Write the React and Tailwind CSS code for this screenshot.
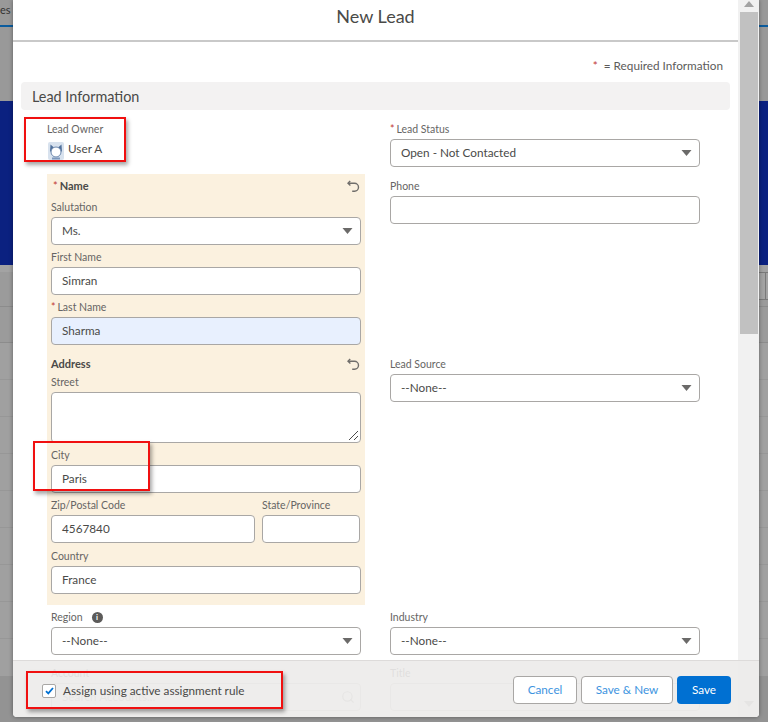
import { Search } from 'lucide-react';

function Caret() {
  return (
    <svg className="absolute right-[7px] top-1/2 -translate-y-1/2" width="11" height="7" viewBox="0 0 11 7">
      <path d="M0.5 0.5h10L5.500 6.500z" fill="#6b6a69" />
    </svg>
  );
}

function UndoIcon() {
  return (
    <svg width="13" height="13" viewBox="0 0 13 13" fill="none" stroke="#706e6b" strokeWidth="1.4">
      <path d="M3.2 1L1 3.3l2.4 2.3" />
      <path d="M1.4 3.3h6.1a3.9 3.9 0 0 1 0 8H5.2" />
    </svg>
  );
}

function Field({ label, required, children, className = '' }) {
  return (
    <div className={`flex flex-col ${className}`}>
      <div className="flex h-[22px] items-center pt-[2px] text-[10.5px] leading-none text-[#666564]">
        {required && <span className="mr-[2px] text-[#c23934]">*</span>}
        {label}
      </div>
      {children}
    </div>
  );
}

function Box({ value, filled, select }) {
  return (
    <div
      className={`relative flex h-[28px] items-center rounded-[4px] border border-[#a9a7a5] pl-[10px] text-[11.75px] text-[#4a4a48] ${
        filled ? 'bg-[#e8f0fe]' : 'bg-white'
      }`}
    >
      {value}
      {select && <Caret />}
    </div>
  );
}

function Backdrop() {
  return (
    <div className="flex h-[722px] flex-col bg-[#a0a0a0]">
      <div className="h-[25px] bg-[#999999] text-[11px] leading-[19px] text-[#333333]">es</div>
      <div className="h-[2px] bg-[#0b5c9e]" />
      <div className="h-[74px] bg-[#999999]" />
      <div className="h-[164px] bg-[#0b2180]" />
      <div className="h-[7px] bg-[#a3a3a3]" />
      <div className="flex h-[35px] justify-end border-b border-[#8c8c8c] bg-[#9b9b9b]">
        <div className="flex h-[28px] w-[9px] justify-end border-y border-[#7a7a7a] bg-[#a3a3a3]">
          <div className="w-[3px] border-l border-[#7a7a7a]" />
        </div>
      </div>
      <div className="h-[36px] border-b border-[#8c8c8c] bg-[#9b9b9b]" />
      <div className="h-[37px] border-b border-[#979797]" />
      <div className="h-[37px] border-b border-[#979797]" />
      <div className="h-[37px] border-b border-[#979797]" />
      <div className="h-[37px] border-b border-[#979797]" />
      <div className="h-[37px] border-b border-[#979797]" />
      <div className="h-[37px] border-b border-[#979797]" />
      <div className="h-[37px] border-b border-[#979797]" />
      <div className="h-[37px] border-b border-[#979797]" />
      <div className="h-[37px]" />
      <div className="flex-1 bg-[#939393]" />
    </div>
  );
}

export default function App() {
  return (
    <div className="relative h-[722px] w-[768px] overflow-hidden font-['Lato',sans-serif]">
      <Backdrop />

      {/* modal */}
      <div className="absolute left-[13px] top-0 flex h-[717px] w-[746px] overflow-hidden rounded-b-[4px] bg-white shadow-[0_0_4px_rgba(0,0,0,0.4)]">
        <div className="flex w-[725px] flex-col">
          <div className="flex h-[42px] shrink-0 items-center justify-center border-b-2 border-[#c9c9c9] pb-[7px] text-[18px] text-[#4a4a48]">
            New Lead
          </div>
          <div className="flex h-[40px] shrink-0 items-center justify-end pr-[15px] pt-[7px] text-[11.75px] text-[#5c5b5a]">
            <span className="mr-[6px] text-[#c23934]">*</span>= Required Information
          </div>
          <div className="mx-[8px] flex h-[28px] w-[709px] shrink-0 items-center rounded-[4px] bg-[#f3f2f2] pl-[11px] pt-[1px] text-[14.4px] text-[#4a4a48]">
            Lead Information
          </div>

          <div className="flex pt-[7px]">
            <div className="ml-[34px] w-[318px]">
              <div className="h-[57px]">
                <div className="flex h-[22px] items-center pt-[2px] text-[10.5px] leading-none text-[#666564]">Lead Owner</div>
                <div className="mt-[3px] flex items-start gap-[4px] pl-[1px] text-[11.75px] leading-[14px] text-[#4a4a48]">
                  <svg width="16" height="18" viewBox="0 0 16 18">
                    <rect width="16" height="18" rx="2" fill="#d8e2ee" />
                    <path d="M2.500 2.500l3.500 3h4l3.500-3 .5 7H2z" fill="#50709b" />
                    <circle cx="8" cy="10" r="5" fill="#ffffff" stroke="#6d89ae" />
                    <rect x="4" y="15.500" width="8" height="2" fill="#7d97bb" />
                  </svg>
                  User A
                </div>
              </div>

              <div className="h-[431px] bg-[#fbf1df] px-[4px]">
                <div className="flex h-[21px] items-center justify-between pr-[1px] pt-[3px] text-[11px] font-bold text-[#4a4a48]">
                  <span className="pl-[2px]">
                    <span className="mr-[2px] font-normal text-[#c23934]">*</span>Name
                  </span>
                  <UndoIcon />
                </div>
                <Field label="Salutation"><Box value="Ms." select /></Field>
                <Field label="First Name"><Box value="Simran" /></Field>
                <Field label="Last Name" required><Box value="Sharma" filled /></Field>
                <div className="flex h-[25px] items-center justify-between pr-[1px] pt-[13px] text-[11px] font-bold text-[#4a4a48]">
                  <span>Address</span>
                  <UndoIcon />
                </div>
                <Field label="Street">
                  <div className="relative h-[51px] rounded-[4px] border border-[#a9a7a5] bg-white">
                    <svg className="absolute bottom-[1px] right-[1px]" width="11" height="11" viewBox="0 0 11 11" stroke="#4b4a49" strokeWidth="1">
                      <path d="M1 10L10 1M6 10l4-4" />
                    </svg>
                  </div>
                </Field>
                <Field label="City"><Box value="Paris" /></Field>
                <div className="flex gap-[7px]">
                  <Field label="Zip/Postal Code" className="w-[204px]"><Box value="4567840" /></Field>
                  <Field label="State/Province" className="w-[98px]"><Box value="" /></Field>
                </div>
                <Field label="Country" className="mt-[1px]"><Box value="France" /></Field>
              </div>

              <div className="px-[4px]">
                <Field
                  label={
                    <span className="flex items-center gap-[9px]">
                      Region
                      <span className="flex h-[11px] w-[11px] items-center justify-center rounded-full bg-[#5c5b5a] text-[8px] font-bold text-white">i</span>
                    </span>
                  }
                >
                  <Box value="--None--" select />
                </Field>
                <div className="pt-[6px]">
                  <Field label="Account">
                    <div className="relative h-[28px] rounded-[4px] border border-[#c9c7c5] pl-[10px] text-[11.75px] leading-[26px] text-[#a8a8a6]">
                      Search Accounts...
                      <Search className="absolute right-[5px] top-[6px] text-[#a8a8a6]" size={14} />
                    </div>
                  </Field>
                </div>
              </div>
            </div>

            <div className="ml-[25px] w-[310px]">
              <Field label="Lead Status" required><Box value="Open - Not Contacted" select /></Field>
              <Field label="Phone" className="mt-[7px]"><Box value="" /></Field>
              <Field label="Lead Source" className="mt-[128px]"><Box value="--None--" select /></Field>
              <Field label="Industry" className="mt-[203px]"><Box value="--None--" select /></Field>
              <Field label="Title" className="mt-[6px]">
                <div className="h-[28px] rounded-[4px] border border-[#c9c7c5]" />
              </Field>
            </div>
          </div>
        </div>

        {/* scrollbar */}
        <div className="flex w-[21px] flex-col items-center bg-[#f1f1f1]">
          <svg className="mt-[1px]" width="10" height="6" viewBox="0 0 10 6"><path d="M5 0l5 6H0z" fill="#a3a3a3" /></svg>
          <div className="mt-[5px] h-[322px] w-[18px] bg-[#c1c1c1]" />
          <div className="flex-1" />
          <svg className="mb-[10px]" width="10" height="6" viewBox="0 0 10 6"><path d="M5 6l5-6H0z" fill="#a3a3a3" /></svg>
        </div>

        {/* footer sits over the scrolling form */}
        <div className="absolute inset-x-0 bottom-0 flex h-[57px] items-center justify-between border-t border-[#dddbda] bg-[#ecebea]/90 pl-[29px] pr-[28px]">
          <div className="flex items-center gap-[7px] pt-[4px] text-[11.75px] text-[#4a4a48]">
            <span className="flex h-[14px] w-[14px] items-center justify-center rounded-[2px] border border-[#a9a7a5] bg-white">
              <svg width="9" height="8" viewBox="0 0 9 8" fill="none" stroke="#0070d2" strokeWidth="1.800"><path d="M1 4.200l2.300 2.200L8 1" /></svg>
            </span>
            Assign using active assignment rule
          </div>
          <div className="flex gap-[4px] pt-[2px] text-[11.75px]">
            <div className="flex h-[28px] w-[64px] items-center justify-center rounded-[4px] border border-[#a9a7a5] bg-white text-[#3d94e0]">Cancel</div>
            <div className="flex h-[28px] w-[92px] items-center justify-center rounded-[4px] border border-[#a9a7a5] bg-white text-[#3d94e0]">Save &amp; New</div>
            <div className="flex h-[28px] w-[54px] items-center justify-center rounded-[4px] bg-[#0070d2] text-white">Save</div>
          </div>
        </div>
      </div>

      {/* red annotation boxes */}
      <div className="absolute left-[24px] top-[117px] h-[45px] w-[102px] border-2 border-[#f01010] shadow-[2px_3px_4px_rgba(0,0,0,0.35)]" />
      <div className="absolute left-[33px] top-[441px] h-[50px] w-[117px] border-2 border-[#f01010] shadow-[2px_3px_4px_rgba(0,0,0,0.35)]" />
      <div className="absolute left-[26px] top-[671px] h-[38px] w-[257px] border-2 border-[#f01010] shadow-[2px_3px_4px_rgba(0,0,0,0.35)]" />
    </div>
  );
}
